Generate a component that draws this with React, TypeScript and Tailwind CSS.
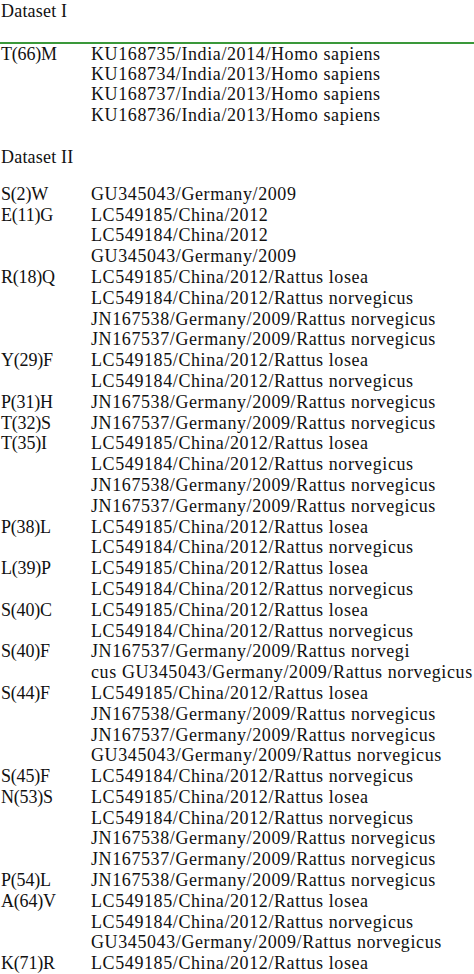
import React from "react";

type Row = [string, string];

const ds1: Row[] = [
  ["T(66)M", "KU168735/India/2014/Homo sapiens"],
  ["", "KU168734/India/2013/Homo sapiens"],
  ["", "KU168737/India/2013/Homo sapiens"],
  ["", "KU168736/India/2013/Homo sapiens"],
];

const L = "LC549185/China/2012/Rattus losea";
const L4 = "LC549184/China/2012/Rattus norvegicus";
const J8 = "JN167538/Germany/2009/Rattus norvegicus";
const J7 = "JN167537/Germany/2009/Rattus norvegicus";
const G = "GU345043/Germany/2009/Rattus norvegicus";

const ds2: Row[] = [
  ["S(2)W", "GU345043/Germany/2009"],
  ["E(11)G", "LC549185/China/2012"],
  ["", "LC549184/China/2012"],
  ["", "GU345043/Germany/2009"],
  ["R(18)Q", L],
  ["", L4],
  ["", J8],
  ["", J7],
  ["Y(29)F", L],
  ["", L4],
  ["P(31)H", J8],
  ["T(32)S", J7],
  ["T(35)I", L],
  ["", L4],
  ["", J8],
  ["", J7],
  ["P(38)L", L],
  ["", L4],
  ["L(39)P", L],
  ["", L4],
  ["S(40)C", L],
  ["", L4],
  ["S(40)F", "JN167537/Germany/2009/Rattus norvegi"],
  ["", "cus GU345043/Germany/2009/Rattus norvegicus"],
  ["S(44)F", L],
  ["", J8],
  ["", J7],
  ["", G],
  ["S(45)F", L4],
  ["N(53)S", L],
  ["", L4],
  ["", J8],
  ["", J7],
  ["P(54)L", J8],
  ["A(64)V", L],
  ["", L4],
  ["", G],
  ["K(71)R", L],
];

function Rows({ rows, lh }: { rows: Row[]; lh: string }) {
  return (
    <div className="flex flex-col">
      {rows.map(([a, b], i) => (
        <div key={i} className={`flex whitespace-nowrap ${lh}`}>
          <div className="w-[91px] shrink-0 pl-[1px] tracking-[-0.2px]">{a}</div>
          <div className="shrink-0 tracking-[0.6px]">{b}</div>
        </div>
      ))}
    </div>
  );
}

export default function App() {
  return (
    <div
      className="w-[474px] h-[974px] overflow-hidden bg-white text-[#111] text-[18px]"
      style={{ fontFamily: '"Liberation Serif", "Times New Roman", serif' }}
    >
      <div className="pl-[1px] leading-[20.8px] pt-[1px] tracking-[0.2px]">Dataset I</div>
      <div className="mt-[20px] h-[2px] w-full bg-[#3a983a]" />
      <Rows rows={ds1} lh="leading-[20.3px]" />
      <div className="mt-[22px] pl-[1px] leading-[20.8px] tracking-[0.2px]">Dataset II</div>
      <div className="mt-[16px]">
        <Rows rows={ds2} lh="leading-[20.8px]" />
      </div>
    </div>
  );
}
